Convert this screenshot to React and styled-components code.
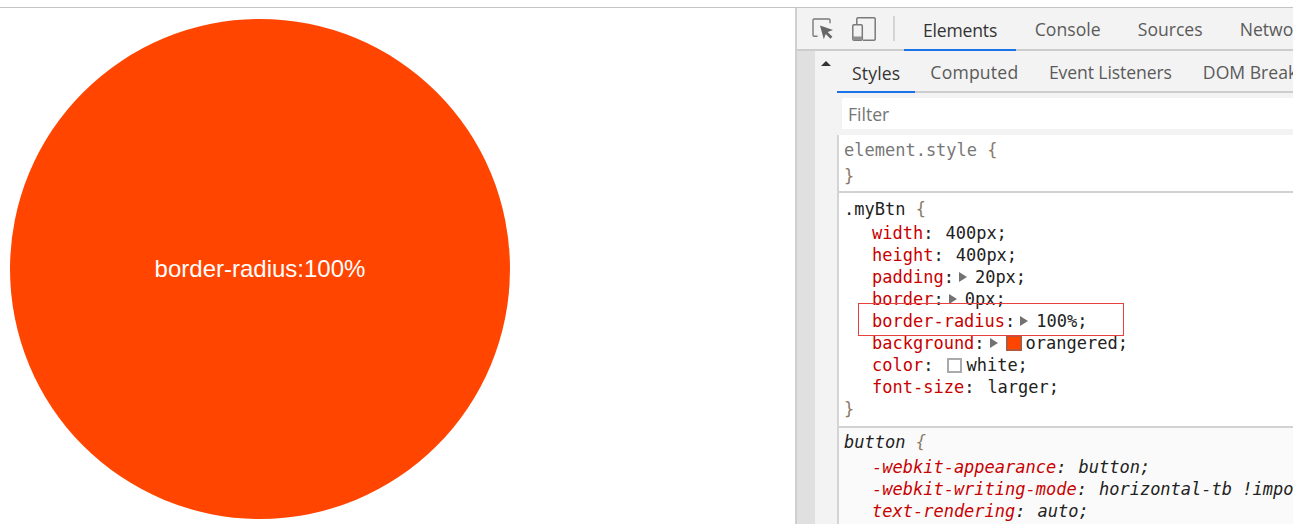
import React from "react";
import styled, { createGlobalStyle } from "styled-components";

const Global = createGlobalStyle`
  html, body { margin: 0; padding: 0; background: #fff; overflow: hidden; }
  #root { width: 1293px; height: 524px; overflow: hidden; }
`;

const Shell = styled.div`
  width: 1293px; height: 524px; display: flex; flex-direction: column; overflow: hidden;
`;
const TopEdge = styled.div`
  height: 7px; flex: none; border-bottom: 1px solid #c4c4c4; background: #fff;
`;
const Main = styled.div`
  flex: 1; display: flex; min-height: 0;
`;
const Page = styled.div`
  width: 795px; flex: none; padding: 11px 0 0 10px; box-sizing: border-box;
`;
const CircleButton = styled.button`
  width: 500px; height: 500px; border: 0; padding: 0; border-radius: 100%;
  background: orangered; color: #fff; display: block;
  font: 24px "Liberation Sans", Arial, sans-serif;
`;
const DevTools = styled.div`
  flex: 1; min-width: 0; display: flex; flex-direction: column; overflow: hidden;
  border-left: 2px solid #cfcfcf; background: #f3f3f3;
`;
const Toolbar = styled.div`
  height: 43px; flex: none; box-sizing: border-box; display: flex; align-items: stretch;
  background: #f3f3f3; border-bottom: 2px solid #cdcdcd; padding-left: 15px;
`;
const IconSlot = styled.div`
  width: ${p => p.$w}px; display: flex; align-items: center; flex: none; margin-bottom: -1px;
`;
const Divider = styled.div`
  width: 2px; height: 25px; background: #d4d4d4; align-self: center; margin: 0 9px 0 0; flex: none;
`;
const Tab = styled.div`
  flex: none; box-sizing: border-box; height: ${p => p.$h}px; padding: ${p => p.$top ?? 2}px ${p => p.$pad}px 0;
  display: flex; align-items: center;
  font: 17.6px "Open Sans", "Noto Sans", sans-serif;
  letter-spacing: ${p => p.$ls ?? 0}px;
  color: ${p => (p.$active ? "#333" : "#5a5a5a")};
  border-bottom: 2px solid ${p => (p.$active ? "#1a73e8" : "transparent")};
  white-space: nowrap;
`;
const Body = styled.div`
  flex: 1; display: flex; min-height: 0;
`;
const Gutter = styled.div`
  width: 18px; flex: none; background: #e0e0e0;
`;
const Scroll = styled.div`
  width: 22px; flex: none; background: #f3f3f3; display: flex; justify-content: center; padding-top: 10px;
  box-sizing: border-box;
`;
const UpArrow = styled.div`
  width: 0; height: 0; border-left: 5px solid transparent; border-right: 5px solid transparent;
  border-bottom: 5px solid #333;
`;
const Sidebar = styled.div`
  flex: 1; min-width: 0; display: flex; flex-direction: column; overflow: hidden;
`;
const SubTabs = styled.div`
  height: 42px; flex: none; box-sizing: border-box; display: flex;
  border-bottom: 2px solid #cdcdcd;
`;
const FilterBar = styled.div`
  height: 42px; flex: none; box-sizing: border-box; padding: 5px 0 6px 5px; background: #f3f3f3;
`;
const FilterInput = styled.div`
  height: 31px; background: #fff; display: flex; align-items: center; padding-left: 6px;
  font: 17.6px "Open Sans", "Noto Sans", sans-serif; color: #757575;
`;
const Rules = styled.div`
  flex: 1; min-height: 0; border-left: 2px solid #d4d4d4; overflow: hidden;
  font: 17px/22px "DejaVu Sans Mono", monospace; color: #222;
`;
const Rule = styled.section`
  position: relative; box-sizing: border-box; height: ${p => p.$h}px; padding: ${p => p.$top}px 0 0 5px;
  background: ${p => p.$bg || "#fff"}; border-bottom: 2px solid #d2d2d2; white-space: nowrap;
  font-style: ${p => (p.$italic ? "italic" : "normal")};
`;
const Selector = styled.div`
  height: ${p => p.$h}px; line-height: 22px; color: ${p => p.$color || "#222"};
`;
const Brace = styled.span`
  color: #8a7a68;
`;
const Closing = styled.div`
  height: 22px; color: #8a7a68;
`;
const Decl = styled.div`
  height: 22px; padding-left: 28px; display: flex; align-items: center;
`;
const Prop = styled.span`
  color: #c80000;
`;
const Colon = styled.span`
  margin-right: ${p => p.$gap}px;
`;
const Arrow = styled.span`
  width: 0; height: 0; flex: none; margin-right: 8px;
  border-top: 5.5px solid transparent; border-bottom: 5.5px solid transparent;
  border-left: 8px solid #727272;
`;
const Swatch = styled.span`
  width: ${p => p.$size}px; height: ${p => p.$size}px; flex: none; box-sizing: border-box; margin-right: 4px;
  background: ${p => p.$color}; border: 2px solid ${p => p.$border};
`;
const Highlight = styled.div`
  position: absolute; left: 19px; top: 110px; width: 266px; height: 33px; box-sizing: border-box;
  border: 1px solid #e8403f; pointer-events: none;
`;

const InspectIcon = () => (
  <svg width="22" height="22" viewBox="0 0 22 22" fill="none">
    <path d="M5.5 18.2H2.2a1.2 1.2 0 0 1-1.2-1.2V2.2A1.2 1.2 0 0 1 2.2 1h14.6A1.2 1.2 0 0 1 18 2.2v3" stroke="#7a7a7a" strokeWidth="1.4" />
    <path d="M8 7.5l13 4.6-5.3 1.9 4.7 4.8-2 2-4.7-4.8-1.9 5.2z" fill="#666" />
  </svg>
);
const DeviceIcon = () => (
  <svg width="24" height="24" viewBox="0 0 24 24" fill="none">
    <path d="M4.8 7V2A1.2 1.2 0 0 1 6 .8h16A1.2 1.2 0 0 1 23.2 2v20a1.2 1.2 0 0 1-1.2 1.2H11" stroke="#7a7a7a" strokeWidth="1.5" />
    <rect x="0.8" y="7.8" width="9.5" height="15.4" rx="1.2" stroke="#7a7a7a" strokeWidth="1.5" />
    <rect x="1" y="19.5" width="9" height="3.5" fill="#8f8f8f" />
  </svg>
);

export default function App() {
  return (
    <Shell>
      <Global />
      <TopEdge />
      <Main>
        <Page>
          <CircleButton>border-radius:100%</CircleButton>
        </Page>
        <DevTools>
          <Toolbar>
            <IconSlot $w={40}><InspectIcon /></IconSlot>
            <IconSlot $w={41}><DeviceIcon /></IconSlot>
            <Divider />
            <Tab $h={43} $pad={19} $active $ls={-0.2}>Elements</Tab>
            <Tab $h={41} $pad={18.5} $ls={0.05}>Console</Tab>
            <Tab $h={41} $pad={18.5}>Sources</Tab>
            <Tab $h={41} $pad={18.5}>Network</Tab>
          </Toolbar>
          <Body>
            <Gutter />
            <Scroll><UpArrow /></Scroll>
            <Sidebar>
              <SubTabs>
                <Tab $h={42} $pad={15} $top={3} $active $ls={0.15}>Styles</Tab>
                <Tab $h={40} $pad={15} $top={3} $ls={0.2}>Computed</Tab>
                <Tab $h={40} $pad={15.5} $top={3} $ls={-0.1}>Event Listeners</Tab>
                <Tab $h={40} $pad={15.5} $top={3}>DOM Breakpoints</Tab>
              </SubTabs>
              <FilterBar><FilterInput>Filter</FilterInput></FilterBar>
              <Rules>
                <Rule $h={58} $top={4}>
                  <Selector $h={26} $color="#777">element.style <Brace>{"{"}</Brace></Selector>
                  <Closing>{"}"}</Closing>
                </Rule>
                <Rule $h={235} $top={5}>
                  <Selector $h={24}>.myBtn <Brace>{"{"}</Brace></Selector>
                  <Decl><Prop>width</Prop><Colon $gap={12}>:</Colon>400px;</Decl>
                  <Decl><Prop>height</Prop><Colon $gap={12}>:</Colon>400px;</Decl>
                  <Decl><Prop>padding</Prop><Colon $gap={5}>:</Colon><Arrow />20px;</Decl>
                  <Decl><Prop>border</Prop><Colon $gap={5}>:</Colon><Arrow />0px;</Decl>
                  <Decl><Prop>border-radius</Prop><Colon $gap={5}>:</Colon><Arrow />100%;</Decl>
                  <Decl><Prop>background</Prop><Colon $gap={5}>:</Colon><Arrow /><Swatch $size={16} $color="orangered" $border="#b5573a" />orangered;</Decl>
                  <Decl><Prop>color</Prop><Colon $gap={14}>:</Colon><Swatch $size={15} $color="#fff" $border="#aaa" />white;</Decl>
                  <Decl><Prop>font-size</Prop><Colon $gap={13}>:</Colon>larger;</Decl>
                  <Closing>{"}"}</Closing>
                  <Highlight />
                </Rule>
                <Rule $h={120} $top={3} $bg="#fafafa" $italic>
                  <Selector $h={25}>button <Brace>{"{"}</Brace></Selector>
                  <Decl><Prop>-webkit-appearance</Prop><Colon $gap={12}>:</Colon>button;</Decl>
                  <Decl><Prop>-webkit-writing-mode</Prop><Colon $gap={12}>:</Colon>horizontal-tb !important;</Decl>
                  <Decl><Prop>text-rendering</Prop><Colon $gap={12}>:</Colon>auto;</Decl>
                </Rule>
              </Rules>
            </Sidebar>
          </Body>
        </DevTools>
      </Main>
    </Shell>
  );
}
